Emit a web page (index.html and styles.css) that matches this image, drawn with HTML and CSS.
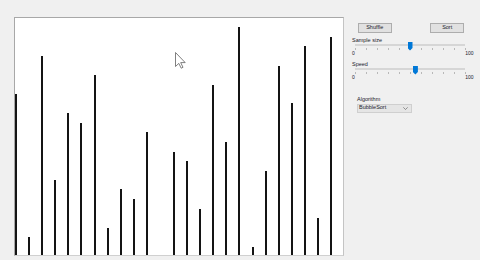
FILE: index.html
```html
<!DOCTYPE html>
<html>
<head>
<meta charset="utf-8">
<link rel="stylesheet" href="styles.css">
</head>
<body>
<div class="app">
  <div class="canvas">
    <div class="bars">
      <div class="slot"><div class="bar" style="height:161px"></div></div>
      <div class="slot"><div class="bar" style="height:18px"></div></div>
      <div class="slot"><div class="bar" style="height:199px"></div></div>
      <div class="slot"><div class="bar" style="height:75px"></div></div>
      <div class="slot"><div class="bar" style="height:142px"></div></div>
      <div class="slot"><div class="bar" style="height:132px"></div></div>
      <div class="slot"><div class="bar" style="height:180px"></div></div>
      <div class="slot"><div class="bar" style="height:27px"></div></div>
      <div class="slot"><div class="bar" style="height:66px"></div></div>
      <div class="slot"><div class="bar" style="height:56px"></div></div>
      <div class="slot"><div class="bar" style="height:123px"></div></div>
      <div class="slot"><div class="bar" style="height:0px"></div></div>
      <div class="slot"><div class="bar" style="height:103px"></div></div>
      <div class="slot"><div class="bar" style="height:94px"></div></div>
      <div class="slot"><div class="bar" style="height:46px"></div></div>
      <div class="slot"><div class="bar" style="height:170px"></div></div>
      <div class="slot"><div class="bar" style="height:113px"></div></div>
      <div class="slot"><div class="bar" style="height:228px"></div></div>
      <div class="slot"><div class="bar" style="height:8px"></div></div>
      <div class="slot"><div class="bar" style="height:84px"></div></div>
      <div class="slot"><div class="bar" style="height:189px"></div></div>
      <div class="slot"><div class="bar" style="height:152px"></div></div>
      <div class="slot"><div class="bar" style="height:209px"></div></div>
      <div class="slot"><div class="bar" style="height:37px"></div></div>
      <div class="slot"><div class="bar" style="height:218px"></div></div>
    </div>
    <svg class="cursor" width="12" height="17" viewBox="0 0 12 17">
      <path d="M0.5 0.5 L0.5 14.5 L3.8 11.4 L6.2 16.2 L8 15.3 L5.7 10.6 L10.2 10.6 Z" fill="#fff" stroke="#606060" stroke-width="0.8" stroke-linejoin="round"/>
    </svg>
  </div>
  <div class="side">
    <div class="buttons">
      <div class="btn">Shuffle</div>
      <div class="btn">Sort</div>
    </div>
    <div class="label first">Sample size</div>
    <div class="slider">
      <div class="track"><div class="thumb" style="left:50%"></div></div>
      <div class="ticks"></div>
      <div class="scale"><span>0</span><span>100</span></div>
    </div>
    <div class="label second">Speed</div>
    <div class="slider">
      <div class="track"><div class="thumb" style="left:55%"></div></div>
      <div class="ticks"></div>
      <div class="scale"><span>0</span><span>100</span></div>
    </div>
    <div class="algo">
      <div class="label">Algorithm</div>
      <div class="combo">
        <span>BubbleSort</span>
        <svg width="5" height="3" viewBox="0 0 5 3"><path d="M0.3 0.3 L2.5 2.5 L4.7 0.3" fill="none" stroke="#555" stroke-width="0.6"/></svg>
      </div>
    </div>
  </div>
</div>
</body>
</html>
```

FILE: styles.css
```css
html, body {
  margin: 0;
  padding: 0;
  background: #f0f0f0;
  width: 480px;
  height: 260px;
  overflow: hidden;
  font-family: "Liberation Sans", Arial, sans-serif;
  color: #1a1a2a;
}
.app {
  display: flex;
  align-items: flex-start;
}
.canvas {
  position: relative;
  margin: 17px 0 0 14px;
  width: 330px;
  height: 239px;
  box-sizing: border-box;
  background: #fff;
  border-top: 1px solid #a8a8a8;
  border-left: 1px solid #a8a8a8;
  border-right: 1px solid #c4c4c4;
  border-bottom: 1px solid #d0d0d0;
}
.bars {
  display: flex;
  align-items: flex-end;
  height: 100%;
  margin-left: -0.3px;
}
.slot {
  flex: none;
  width: 13.16px;
}
.bar {
  width: 2px;
  background: #141414;
}
.cursor {
  position: absolute;
  left: 160px;
  top: 34px;
}
.side {
  display: flex;
  flex-direction: column;
  padding: 23px 0 0 8px;
  width: 128px;
  font-size: 5.5px;
}
.buttons {
  display: flex;
  gap: 38.5px;
  margin-left: 5.7px;
}
.btn {
  width: 34px;
  height: 10px;
  box-sizing: border-box;
  background: #e1e1e1;
  border: 1px solid #adadad;
  display: flex;
  align-items: center;
  justify-content: center;
  line-height: 1;
}
.label {
  height: 6px;
  line-height: 6px;
}
.label.first { margin-top: 4px; }
.label.second { margin-top: 5px; }
.slider {
  display: flex;
  flex-direction: column;
  width: 124px;
}
.track {
  position: relative;
  margin: 1px 0 0 3px;
  width: 110px;
  height: 2px;
  background: #e7e7e7;
  border: 0.5px solid #d6d6d6;
  box-sizing: border-box;
}
.thumb {
  position: absolute;
  top: -3px;
  width: 5px;
  height: 8.5px;
  margin-left: -2.5px;
  background: #0078d7;
  clip-path: polygon(0 0, 100% 0, 100% 70%, 50% 100%, 0 70%);
}
.ticks {
  margin: 2px 0 0 3px;
  width: 111px;
  height: 1.5px;
  background: repeating-linear-gradient(90deg, #b8b8b8 0 0.8px, transparent 0.8px 11px);
}
.scale {
  display: flex;
  justify-content: space-between;
  margin-top: 1.5px;
  height: 5px;
  line-height: 5px;
  width: 121.5px;
  font-size: 5px;
}
.algo {
  display: flex;
  flex-direction: column;
  margin: 16px 0 0 5px;
}
.combo {
  margin-top: 1.5px;
  width: 55px;
  height: 9px;
  box-sizing: border-box;
  background: #e5e5e5;
  border: 1px solid #cfcfcf;
  display: flex;
  align-items: center;
  justify-content: space-between;
  padding: 0 3px 0 1px;
  line-height: 1;
}
```
